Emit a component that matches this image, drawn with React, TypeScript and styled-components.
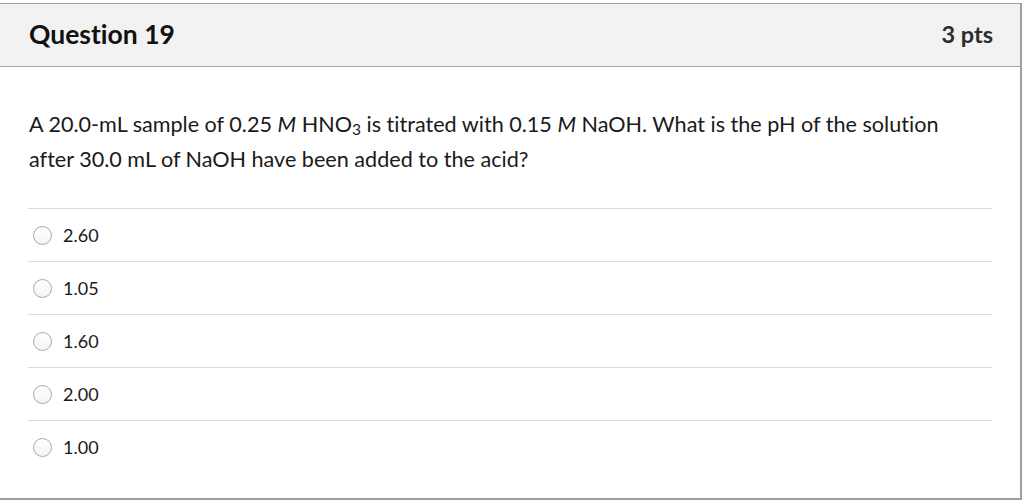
import React from "react";
import styled, { createGlobalStyle } from "styled-components";

const Global = createGlobalStyle`
  html, body { margin: 0; padding: 0; background: #ffffff; }
  body {
    font-family: Lato, "Open Sans", sans-serif;
    color: #1a1a1a;
    overflow: hidden;
    font-variant-ligatures: none;
  }
`;

const Card = styled.div`
  box-sizing: border-box;
  width: 1023px;
  height: 497px;
  margin-top: 3px;
  margin-left: -1px;
  border: 1px solid #9e9e9e;
  border-width: 1px 2px 2px 1px;
  background: #fff;
  display: flex;
  flex-direction: column;
`;

const Header = styled.div`
  box-sizing: border-box;
  height: 63px;
  flex: none;
  background: #f2f2f2;
  border-bottom: 1px solid #a6a6a6;
  display: flex;
  align-items: center;
  justify-content: space-between;
  padding: 0 27px 2px 29px;
`;

const Title = styled.h2`
  margin: 0;
  font-size: 26.5px;
  font-weight: 700;
  color: #111;
`;

const Points = styled.span`
  font-size: 23.5px;
  font-weight: 700;
  color: #2d2d2d;
`;

const Body = styled.div`
  padding: 40px 28px 0 28px;
`;

const Prompt = styled.p`
  margin: 0 0 31px 1px;
  max-width: 950px;
  font-size: 21.6px;
  line-height: 35px;
  color: #1a1a1a;
`;

const Var = styled.span`
  font-style: italic;
`;

const Sub = styled.sub`
  font-size: 0.72em;
  vertical-align: -0.2em;
  line-height: 0;
`;

const Answers = styled.div`
  display: flex;
  flex-direction: column;
`;

const Row = styled.label`
  box-sizing: border-box;
  height: 53px;
  border-top: 1px solid #dadada;
  display: flex;
  align-items: center;
  gap: 11px;
  padding: 0 0 0 5px;
`;

const Radio = styled.span`
  box-sizing: border-box;
  width: 19px;
  height: 19px;
  border-radius: 50%;
  border: 1px solid #a9a9a9;
  background: linear-gradient(#ffffff, #f4f4f4);
  flex: none;
`;

const Choice = styled.span`
  font-size: 18px;
  color: #1a1a1a;
`;

const answers = ["2.60", "1.05", "1.60", "2.00", "1.00"];

export default function App() {
  return (
    <>
      <Global />
      <Card>
        <Header>
          <Title>Question 19</Title>
          <Points>3 pts</Points>
        </Header>
        <Body>
          <Prompt>
            A 20.0-mL sample of 0.25 <Var>M</Var> HNO<Sub>3</Sub> is titrated with 0.15 <Var>M</Var> NaOH. What is the pH of the
            solution after 30.0 mL of NaOH have been added to the acid?
          </Prompt>
          <Answers>
            {answers.map((a) => (
              <Row key={a}>
                <Radio />
                <Choice>{a}</Choice>
              </Row>
            ))}
          </Answers>
        </Body>
      </Card>
    </>
  );
}
